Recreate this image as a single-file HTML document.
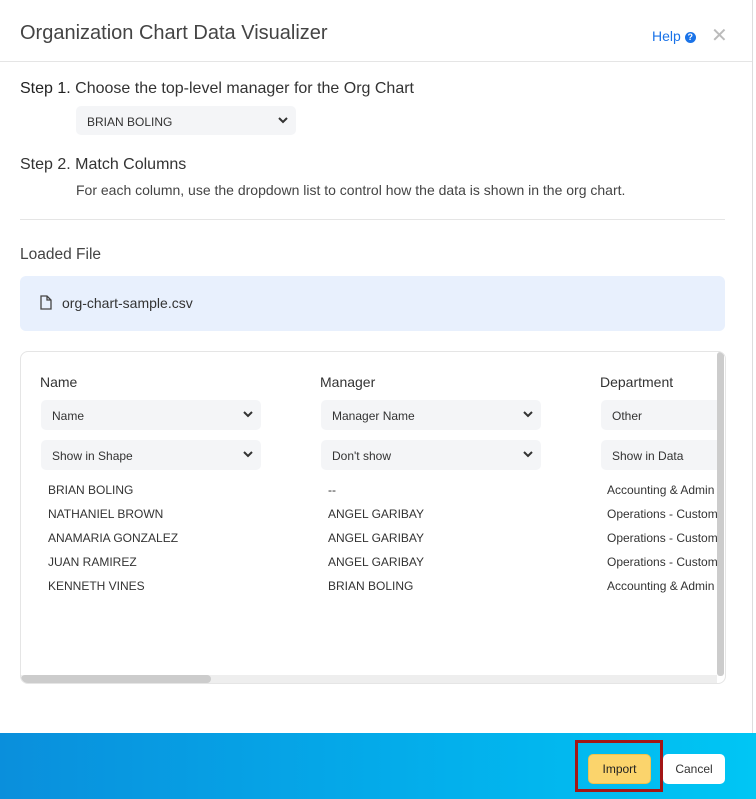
<!DOCTYPE html>
<html><head><style>
*{box-sizing:border-box;margin:0;padding:0}
body{width:756px;height:799px;overflow:hidden;background:#fff;font-family:"Liberation Sans",sans-serif;color:#333;position:relative}
.a{position:absolute}
.sel{position:absolute;background:#f4f5f7;border-radius:5px;height:30px;font-size:12px;color:#333;padding:9px 11px;white-space:nowrap;overflow:hidden}
.sel svg{position:absolute;right:8px;top:11px}
.t{position:absolute;font-size:12px;color:#333;white-space:nowrap}
</style></head><body>
<div class="a" style="left:752px;top:0;width:1px;height:733px;background:#ddd"></div>
<div class="a" style="left:20px;top:22px;font-size:20px;color:#444">Organization Chart Data Visualizer</div>
<div class="a" style="left:652px;top:28px;font-size:14px;color:#1a73e8">Help <span style="display:inline-block;width:11px;height:11px;border-radius:50%;background:#1a73e8;color:#fff;font-size:9px;text-align:center;line-height:11px;font-weight:bold;vertical-align:1px">?</span></div>
<div class="a" style="left:711px;top:23px;font-size:20px;color:#bbb">✕</div>
<div class="a" style="left:0;top:61px;width:752px;height:1px;background:#e5e5e5"></div>
<div class="a" style="left:20px;top:80px;font-size:16px;color:#333"><span style="color:#222">Step 1.</span> Choose the top-level manager for the Org Chart</div>
<div class="sel" style="left:76px;top:106px;width:220px;height:29px">BRIAN BOLING<svg width="10" height="7" viewBox="0 0 10 7"><path d="M1 1l4 4 4-4" stroke="#333" stroke-width="2" fill="none"/></svg></div>
<div class="a" style="left:20px;top:156px;font-size:16px">Step 2. Match Columns</div>
<div class="a" style="left:76px;top:182px;font-size:14px;color:#444">For each column, use the dropdown list to control how the data is shown in the org chart.</div>
<div class="a" style="left:20px;top:219px;width:705px;height:1px;background:#e5e5e5"></div>
<div class="a" style="left:20px;top:246px;font-size:15.5px;color:#444">Loaded File</div>
<div class="a" style="left:20px;top:276px;width:705px;height:55px;background:#e8f0fd;border-radius:6px"></div>
<svg class="a" style="left:40px;top:295px" width="12" height="15" viewBox="0 0 12 15"><path d="M1 1h6l4 4v9H1z M7 1v4h4" stroke="#444" stroke-width="1.3" fill="none"/></svg>
<div class="a" style="left:62px;top:295px;font-size:14px;color:#333">org-chart-sample.csv</div>
<div class="a" style="left:20px;top:351px;width:706px;height:333px;border:1px solid #e5e5e5;border-radius:8px;overflow:hidden">
<div class="a" style="left:696px;top:0;width:7px;height:324px;background:#ccc;border-radius:3px"></div>
<div class="a" style="left:0;top:323px;width:696px;height:8px;background:#eee"></div>
<div class="a" style="left:0;top:323px;width:190px;height:8px;background:#ccc;border-radius:4px"></div>
</div>
<div class="a" style="left:40px;top:374px;font-size:14px">Name</div>
<div class="a" style="left:320px;top:374px;font-size:14px">Manager</div>
<div class="a" style="left:600px;top:374px;font-size:14px">Department</div>
<div class="sel" style="left:41px;top:400px;width:220px">Name<svg width="10" height="7" viewBox="0 0 10 7"><path d="M1 1l4 4 4-4" stroke="#333" stroke-width="2" fill="none"/></svg></div>
<div class="sel" style="left:321px;top:400px;width:220px">Manager Name<svg width="10" height="7" viewBox="0 0 10 7"><path d="M1 1l4 4 4-4" stroke="#333" stroke-width="2" fill="none"/></svg></div>
<div class="sel" style="left:601px;top:400px;width:116px;border-radius:5px 0 0 5px">Other</div>
<div class="sel" style="left:41px;top:440px;width:220px">Show in Shape<svg width="10" height="7" viewBox="0 0 10 7"><path d="M1 1l4 4 4-4" stroke="#333" stroke-width="2" fill="none"/></svg></div>
<div class="sel" style="left:321px;top:440px;width:220px">Don't show<svg width="10" height="7" viewBox="0 0 10 7"><path d="M1 1l4 4 4-4" stroke="#333" stroke-width="2" fill="none"/></svg></div>
<div class="sel" style="left:601px;top:440px;width:116px;border-radius:5px 0 0 5px">Show in Data</div>
<div class="t" style="left:48px;top:483px">BRIAN BOLING</div>
<div class="t" style="left:48px;top:507px">NATHANIEL BROWN</div>
<div class="t" style="left:48px;top:531px">ANAMARIA GONZALEZ</div>
<div class="t" style="left:48px;top:555px">JUAN RAMIREZ</div>
<div class="t" style="left:48px;top:579px">KENNETH VINES</div>
<div class="t" style="left:328px;top:483px">--</div>
<div class="t" style="left:328px;top:507px">ANGEL GARIBAY</div>
<div class="t" style="left:328px;top:531px">ANGEL GARIBAY</div>
<div class="t" style="left:328px;top:555px">ANGEL GARIBAY</div>
<div class="t" style="left:328px;top:579px">BRIAN BOLING</div>
<div class="a" style="left:607px;top:483px;width:110px;overflow:hidden">
<div class="t" style="position:static;height:24px">Accounting &amp; Admin</div>
<div class="t" style="position:static;height:24px">Operations - Customer</div>
<div class="t" style="position:static;height:24px">Operations - Customer</div>
<div class="t" style="position:static;height:24px">Operations - Customer</div>
<div class="t" style="position:static;height:24px">Accounting &amp; Admin</div>
</div>
<div class="a" style="left:0;top:733px;width:756px;height:66px;background:linear-gradient(90deg,#0a8fdc,#03b0ec 60%,#00c6f4)"></div>
<div class="a" style="left:575px;top:740px;width:88px;height:52px;border:3px solid #a31616"></div>
<div class="a" style="left:588px;top:754px;width:63px;height:30px;background:#fbd46c;border:1px solid #f3c24a;border-radius:5px;font-size:12px;color:#222;text-align:center;line-height:28px">Import</div>
<div class="a" style="left:663px;top:754px;width:62px;height:30px;background:#fff;border-radius:5px;font-size:12px;color:#333;text-align:center;line-height:30px">Cancel</div>
</body></html>
